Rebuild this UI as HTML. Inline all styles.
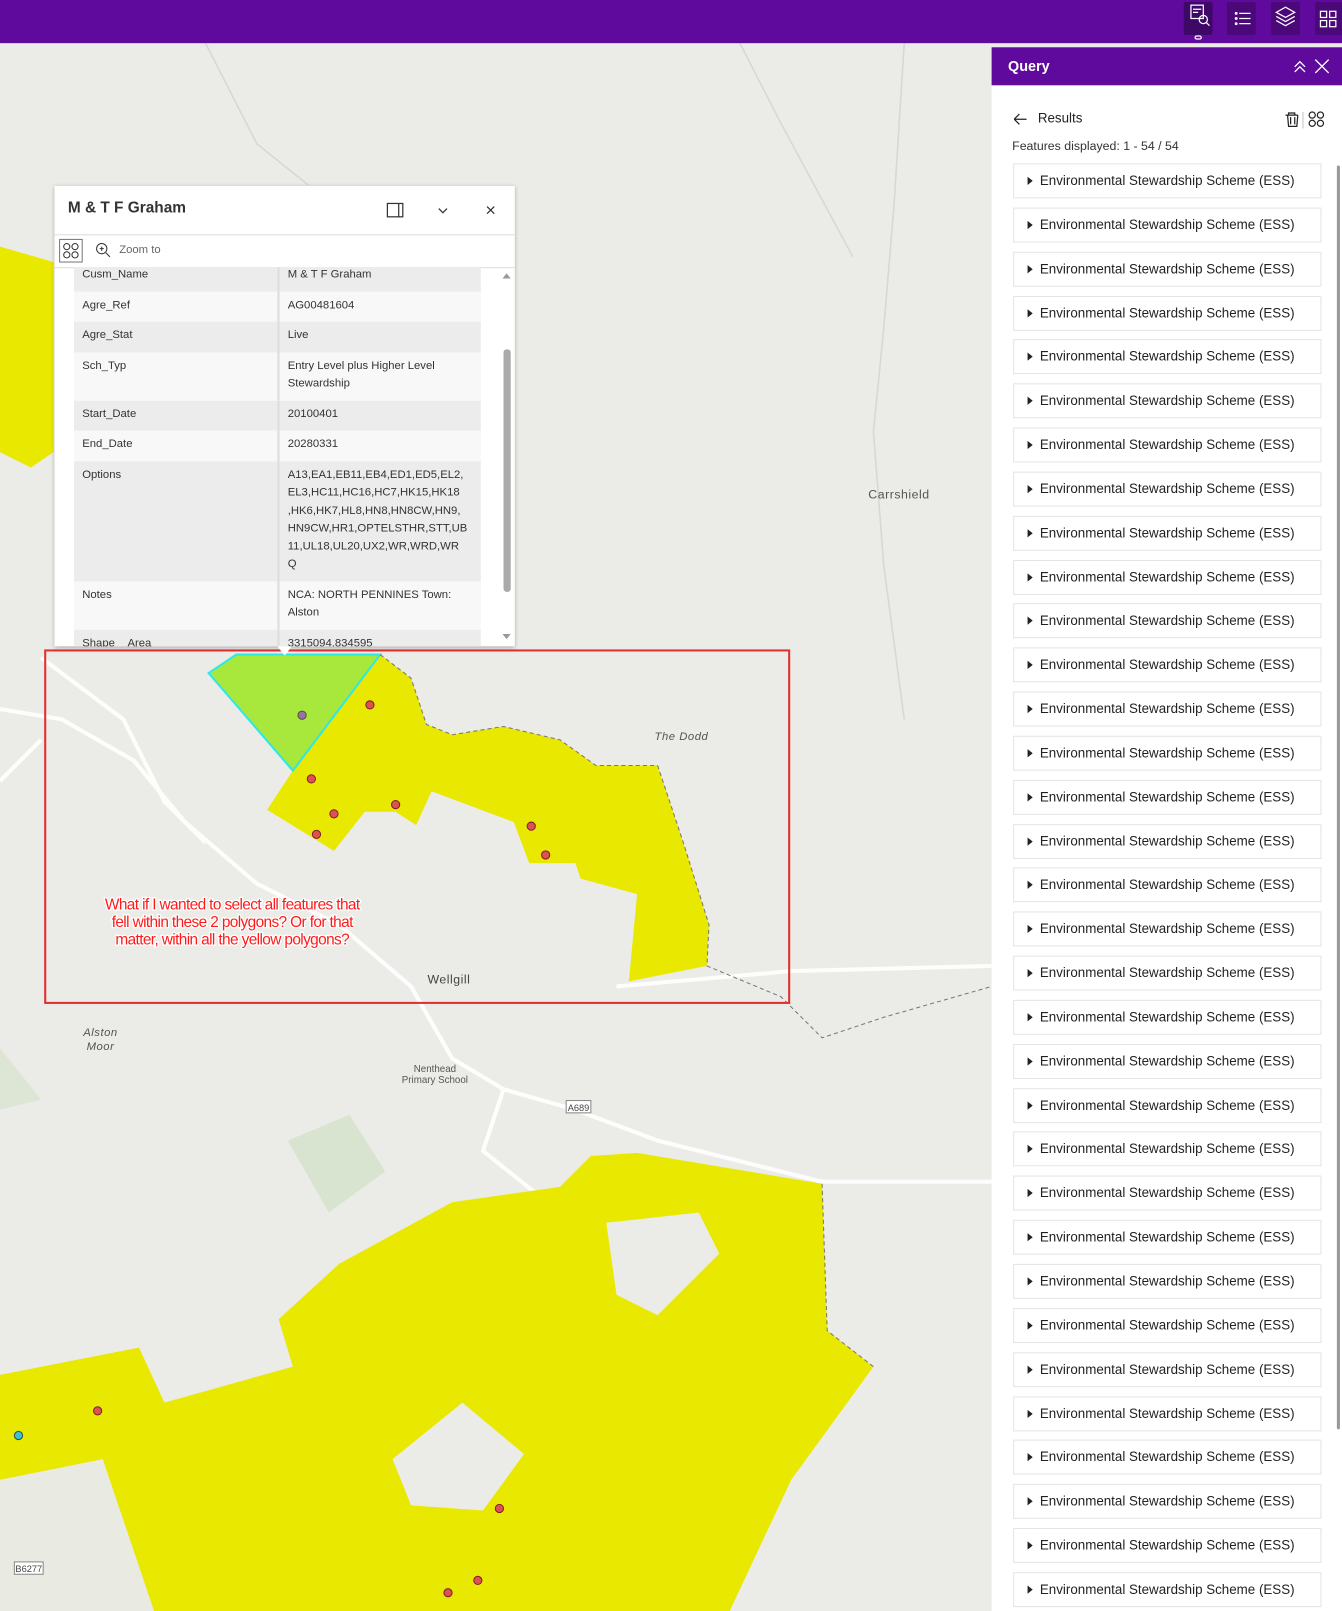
<!DOCTYPE html>
<html><head><meta charset="utf-8"><style>
html,body{margin:0;padding:0;width:1342px;height:1611px;overflow:hidden;background:#ebebe8;font-family:"Liberation Sans",sans-serif}
#w{position:absolute;left:0;top:0;width:1306px;height:1568px;transform:scale(1.02757);transform-origin:0 0;overflow:hidden}
.abs{position:absolute}
#top{left:0;top:0;width:1306px;height:42px;background:#5f0a9c}
.tb{position:absolute;top:2px;width:28px;height:32px;background:#4a0878;border-radius:2px}
#panel{left:965px;top:46px;width:341px;height:1522px;background:#fff}
#ph{height:37px;background:#5f0a9c;color:#fff;font-weight:bold;font-size:14px;line-height:37px;padding-left:16px}
.it{position:absolute;left:21px;width:300px;height:34px;border:1px solid #e4e4e4;background:#fff;font-size:13px;color:#222;line-height:32px;box-sizing:border-box;padding-left:25px}
.it:before{content:"";position:absolute;left:13px;top:12px;border-left:5px solid #222;border-top:4.5px solid transparent;border-bottom:4.5px solid transparent}
#pop{left:53px;top:181px;width:448px;height:448px;background:#fff;box-shadow:0 1px 4px rgba(0,0,0,.3)}
table{border-collapse:collapse;font-size:11px;color:#333;width:396px}
td{vertical-align:top;padding:5px 8px 7px 8px;line-height:17.5px}
td:first-child{width:182px;border-right:2px solid #ddd}
tr:nth-child(odd){background:#ececec}
tr:nth-child(even){background:#f8f8f8}
.lbl{position:absolute;font-size:11px;color:#555;letter-spacing:.5px}
</style></head><body><div id="w">
<svg class="abs" style="left:0;top:42px" width="965" height="1526" viewBox="0 42 965 1526">
<rect x="0" y="42" width="965" height="1526" fill="#ebebe7"/>
<g fill="none" stroke="#fff" stroke-width="4" opacity=".9">
<path d="M0 690 L60 700 L130 740 L180 800 L250 860 L330 900 L400 960 L440 1030 L490 1060 L560 1080 L640 1110 L800 1150 L965 1150"/>
<path d="M40 640 L120 700 L160 780 L200 820"/>
<path d="M0 760 L40 720"/>
<path d="M600 960 L770 945 L965 940"/>
<path d="M490 1060 L470 1120 L520 1160"/>
</g>
<g fill="none" stroke="#d8d8d2" stroke-width="1.5">
<path d="M880 42 L870 200 L860 320 L850 420 L860 550 L880 700"/><path d="M200 42 L250 140 L300 180"/><path d="M720 42 L760 120 L830 250"/>
</g>
<path d="M0 240 L52 255 L52 440 L30 455 L0 440Z" fill="#e8e800"/>
<path d="M370 637 L400 660 L415 705 L440 715 L490 707 L545 720 L580 745 L640 745 L665 820 L690 900 L688 940 L612 955 L620 870 L565 855 L560 840 L515 840 L500 800 L420 770 L405 803 L385 790 L355 790 L325 828 L260 788 L285 750Z" fill="#e8e800"/>
<path d="M203 655 L230 637 L370 637 L285 750Z" fill="#a8e83c" stroke="#2ee8e8" stroke-width="2"/>
<path d="M0 1338 L270 1285 L330 1230 L440 1170 L545 1155 L575 1125 L620 1122 L800 1152 L805 1295 L850 1330 L770 1440 L710 1568 L0 1568Z" fill="#e8e800"/>
<path d="M0 1440 L100 1420 L150 1568 L0 1568Z" fill="#e9ebe2"/>
<path d="M130 1300 L270 1280 L285 1330 L160 1365Z" fill="#ebebe7"/>
<path d="M382 1420 L450 1365 L510 1415 L470 1470 L400 1465Z" fill="#ebebe7"/>
<path d="M590 1190 L680 1180 L700 1220 L640 1280 L600 1260Z" fill="#ebebe7"/>
<path d="M280 1110 L340 1085 L375 1140 L320 1180Z" fill="#d9e4d0"/>
<path d="M0 1020 L0 1080 L40 1070Z" fill="#dde6d5"/>
<g fill="none" stroke="#777" stroke-width="1" stroke-dasharray="4 3"><path d="M370 637 L400 660 L415 705 L440 715 L490 707 L545 720 L580 745 L640 745 L665 820 L690 900 L688 940 L760 970 L800 1010 L860 990 L965 960"/><path d="M800 1152 L805 1295 L850 1330"/></g>
<g fill="#e05050" stroke="#7a2030" stroke-width="1"><circle cx="360" cy="686" r="4"/><circle cx="303" cy="758" r="4"/><circle cx="325" cy="792" r="4"/><circle cx="385" cy="783" r="4"/><circle cx="308" cy="812" r="4"/><circle cx="517" cy="804" r="4"/><circle cx="531" cy="832" r="4"/><circle cx="95" cy="1373" r="4"/><circle cx="486" cy="1468" r="4"/><circle cx="465" cy="1538" r="4"/><circle cx="436" cy="1550" r="4"/></g>
<circle cx="294" cy="696" r="4" fill="#9a70b0" stroke="#553"/><circle cx="18" cy="1397" r="4" fill="#40c0d0" stroke="#255"/>
<rect x="44" y="633" width="724" height="343" fill="none" stroke="#e03030" stroke-width="2"/>
<g font-family="Liberation Sans,sans-serif" font-size="15" fill="#ff1a1a" stroke="#fff" stroke-width="2.5" paint-order="stroke" text-anchor="middle" letter-spacing="-.6"><text x="226" y="885">What if I wanted to select all features that</text><text x="226" y="902">fell within these 2 polygons? Or for that</text><text x="226" y="919">matter, within all the yellow polygons?</text></g>
<rect x="551" y="1071" width="24" height="12" fill="#fff" stroke="#888"/><text x="563" y="1081" font-size="9" text-anchor="middle" fill="#444" font-family="Liberation Sans">A689</text>
<rect x="14" y="1520" width="28" height="12" fill="#fff" stroke="#888"/><text x="28" y="1530" font-size="9" text-anchor="middle" fill="#444" font-family="Liberation Sans">B6277</text>
</svg>
<div class="lbl" style="left:845px;top:474px;font-size:12px">Carrshield</div>
<div class="lbl" style="left:637px;top:711px;font-style:italic">The Dodd</div>
<div class="lbl" style="left:416px;top:946px;font-size:12px;color:#444">Wellgill</div>
<div class="lbl" style="left:81px;top:998px;font-style:italic;text-align:center;line-height:14px">Alston<br>Moor</div>
<div class="lbl" style="left:391px;top:1035px;font-size:9.5px;text-align:center;line-height:11px;letter-spacing:0">Nenthead<br>Primary School</div>
<div id="top" class="abs">
<div class="tb" style="left:1152px;background:#3d0866"></div><div class="tb" style="left:1194px"></div><div class="tb" style="left:1237px"></div><div class="tb" style="left:1280px"></div>
<svg class="abs" style="left:1152px;top:2px" width="154" height="40" fill="none" stroke="#fff" stroke-width="1.2"><rect x="7" y="3" width="12" height="13"/><path d="M9 7h8M9 10h5"/><circle cx="19" cy="17" r="4"/><path d="M22 20l3 3"/><rect x="11" y="33" width="6" height="3" rx="1.5"/>
<path d="M54 11h11M54 16h11M54 21h11"/><circle cx="51" cy="11" r=".8"/><circle cx="51" cy="16" r=".8"/><circle cx="51" cy="21" r=".8"/>
<path d="M99 5l9 5-9 5-9-5z"/><path d="M90 14l9 5 9-5M90 18l9 5 9-5"/>
<rect x="133" y="9" width="6" height="6"/><rect x="142" y="9" width="6" height="6"/><rect x="133" y="18" width="6" height="6"/><rect x="142" y="18" width="6" height="6"/></svg>
</div>
<div id="panel" class="abs"><div id="ph">Query</div>
<svg class="abs" style="left:290px;top:10px" width="46" height="18" fill="none" stroke="#fff" stroke-width="1.3"><path d="M5 9l5-5 5 5M5 14l5-5 5 5M25 2l13 13M38 2L25 15"/></svg>
<svg class="abs" style="left:20px;top:60px" width="320" height="20" fill="none" stroke="#222" stroke-width="1.2"><path d="M2 10h12M2 10l5-5M2 10l5 5"/><path d="M266 6h12M269 6v-2h6v2M268 6l1 11h8l1-11M271 8v7M275 8v7"/><path d="M283 3v16" stroke="#ccc"/><circle cx="292" cy="6" r="3"/><circle cx="300" cy="6" r="3"/><circle cx="292" cy="14" r="3"/><circle cx="300" cy="14" r="3"/></svg>
<div class="abs" style="left:45px;top:61px;font-size:13px;color:#222">Results</div>
<div class="abs" style="left:20px;top:89px;font-size:12px;color:#333">Features displayed: 1 - 54 / 54</div>
<div class="abs" style="left:336px;top:115px;width:3px;height:1230px;background:#999;border-radius:2px"></div>
</div>
<div id="list"></div>
<div id="pop" class="abs">
<div class="abs" style="left:13px;top:13px;font-size:15px;font-weight:bold;color:#333">M &amp; T F Graham</div>
<svg class="abs" style="left:320px;top:14px" width="120" height="20" fill="none" stroke="#333" stroke-width="1.2"><rect x="4" y="3" width="15" height="13"/><path d="M15 3v13"/><path d="M54 8l4 4 4-4"/><path d="M101 6l7 7M108 6l-7 7"/></svg>
<div class="abs" style="left:0;top:47px;width:448px;height:1px;background:#ddd"></div>
<svg class="abs" style="left:4px;top:51px" width="60" height="26" fill="none" stroke="#333" stroke-width="1"><rect x="1" y="1" width="22" height="22" stroke="#777"/><circle cx="8" cy="8" r="3"/><circle cx="16" cy="8" r="3"/><circle cx="8" cy="16" r="3"/><circle cx="16" cy="16" r="3"/><circle cx="42" cy="10" r="5"/><path d="M40 10h4M42 8v4M46 14l4 4"/></svg>
<div class="abs" style="left:63px;top:56px;font-size:11px;color:#666">Zoom to</div>
<div class="abs" style="left:0;top:79px;width:448px;height:1px;background:#ddd"></div>
<div class="abs" style="left:19px;top:79px;width:396px;height:369px;overflow:hidden"><table style="margin-top:-6px">
<tr><td>Cusm_Name</td><td>M &amp; T F Graham</td></tr>
<tr><td>Agre_Ref</td><td>AG00481604</td></tr>
<tr><td>Agre_Stat</td><td>Live</td></tr>
<tr><td>Sch_Typ</td><td>Entry Level plus Higher Level Stewardship</td></tr>
<tr><td>Start_Date</td><td>20100401</td></tr>
<tr><td>End_Date</td><td>20280331</td></tr>
<tr><td>Options</td><td>A13,EA1,EB11,EB4,ED1,ED5,EL2,<br>EL3,HC11,HC16,HC7,HK15,HK18<br>,HK6,HK7,HL8,HN8,HN8CW,HN9,<br>HN9CW,HR1,OPTELSTHR,STT,UB<br>11,UL18,UL20,UX2,WR,WRD,WR<br>Q</td></tr>
<tr><td>Notes</td><td>NCA: NORTH PENNINES Town:<br>Alston</td></tr>
<tr><td>Shape__Area</td><td>3315094.834595</td></tr>
</table></div>
<div class="abs" style="left:437px;top:159px;width:7px;height:236px;background:#aaa;border-radius:3px"></div>
<div class="abs" style="left:436px;top:85px;border-bottom:5px solid #999;border-left:4px solid transparent;border-right:4px solid transparent"></div>
<div class="abs" style="left:436px;top:436px;border-top:5px solid #999;border-left:4px solid transparent;border-right:4px solid transparent"></div>
<div class="abs" style="left:217px;top:448px;border-top:9px solid #fff;border-left:7px solid transparent;border-right:7px solid transparent"></div>
</div>
<script>
var h='';for(var i=0;i<33;i++){h+='<div class="it" style="top:'+(159+i*42.84)+'px;left:986px">Environmental Stewardship Scheme (ESS)</div>';}
document.getElementById('list').innerHTML=h;
</script>
</div></body></html>
